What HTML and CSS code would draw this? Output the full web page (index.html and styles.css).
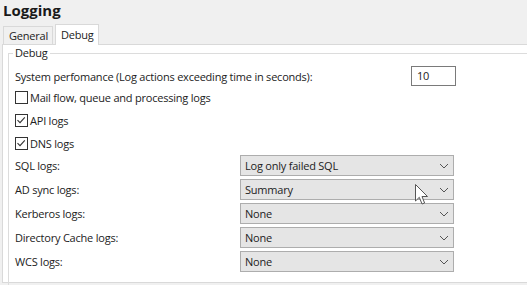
FILE: index.html
```html
<!DOCTYPE html>
<html>
<head>
<meta charset="utf-8">
<link rel="stylesheet" href="styles.css">
</head>
<body>
<div class="title">Logging</div>
<div class="tabs">
  <div class="tab">General</div>
  <div class="tab active">Debug</div>
</div>
<div class="panel">
  <div class="group">
    <div class="legend">Debug</div>
    <div class="row perf">
      <span class="label">System perfomance (Log actions exceeding time in seconds):</span>
      <span class="textbox">10</span>
    </div>
    <div class="check"><span class="box"></span><span>Mail flow, queue and processing logs</span></div>
    <div class="check"><span class="box checked"><svg viewBox="0 0 12 12" width="12" height="12"><path d="M2.5 6.2 L5 8.7 L9.8 3.3" fill="none" stroke="#333" stroke-width="1.1"/></svg></span><span>API logs</span></div>
    <div class="check"><span class="box checked"><svg viewBox="0 0 12 12" width="12" height="12"><path d="M2.5 6.2 L5 8.7 L9.8 3.3" fill="none" stroke="#333" stroke-width="1.1"/></svg></span><span>DNS logs</span></div>
    <div class="selects">
      <div class="row sel"><span class="label">SQL logs:</span><span class="combo">Log only failed SQL<svg class="chev" viewBox="0 0 10 6" width="10" height="6"><path d="M1 1 L5 5 L9 1" fill="none" stroke="#555" stroke-width="1"/></svg></span></div>
      <div class="row sel"><span class="label">AD sync logs:</span><span class="combo">Summary<svg class="chev" viewBox="0 0 10 6" width="10" height="6"><path d="M1 1 L5 5 L9 1" fill="none" stroke="#555" stroke-width="1"/></svg></span></div>
      <div class="row sel"><span class="label">Kerberos logs:</span><span class="combo">None<svg class="chev" viewBox="0 0 10 6" width="10" height="6"><path d="M1 1 L5 5 L9 1" fill="none" stroke="#555" stroke-width="1"/></svg></span></div>
      <div class="row sel"><span class="label">Directory Cache logs:</span><span class="combo">None<svg class="chev" viewBox="0 0 10 6" width="10" height="6"><path d="M1 1 L5 5 L9 1" fill="none" stroke="#555" stroke-width="1"/></svg></span></div>
      <div class="row sel"><span class="label">WCS logs:</span><span class="combo">None<svg class="chev" viewBox="0 0 10 6" width="10" height="6"><path d="M1 1 L5 5 L9 1" fill="none" stroke="#555" stroke-width="1"/></svg></span></div>
    </div>
  </div>
</div>
<svg class="cursor" viewBox="0 0 14 22" width="14" height="22"><path d="M0.5 0.5 L0.5 17 L4.3 13.3 L7 20 L9.6 19 L7 12.5 L12.5 12.5 Z" fill="#fff" stroke="#555" stroke-width="1"/></svg>
</body>
</html>
```
FILE: styles.css
```css
html, body {
  margin: 0;
  padding: 0;
}
body {
  width: 527px;
  height: 285px;
  background: #f0f0f0;
  font-family: "Open Sans", "Noto Sans", sans-serif;
  font-size: 11px;
  letter-spacing: -0.22px;
  color: #222;
  position: relative;
  overflow: hidden;
}
.title {
  height: 24px;
  padding-left: 3px;
  font-size: 15px;
  font-weight: bold;
  line-height: 20px;
  letter-spacing: 0;
  color: #1a1a1a;
}
.tabs {
  display: flex;
  align-items: flex-end;
  height: 20px;
  padding-left: 3px;
}
.tab {
  height: 17px;
  line-height: 17px;
  padding: 0 4px 0 5px;
  border: 1px solid #d9d9d9;
  border-bottom: none;
  background: #f0f0f0;
  width: 39px;
}
.tab.active {
  height: 20px;
  line-height: 19px;
  background: #fff;
  width: 33px;
  margin-left: 2px;
  margin-bottom: -1px;
  position: relative;
  z-index: 1;
}
.panel {
  margin-left: 2px;
  height: 239px;
  background: #fff;
  border: 1px solid #d9d9d9;
  border-right: none;
  padding: 8px 0 0 5px;
  box-sizing: border-box;
}
.group {
  border-top: 1px solid #dcdcdc;
  border-left: 1px solid #dcdcdc;
  height: 231px;
  padding-left: 6px;
  position: relative;
}
.legend {
  position: absolute;
  top: -8px;
  left: 4px;
  background: #fff;
  padding: 0 2px;
  line-height: 14px;
}
.row {
  display: flex;
  align-items: center;
}
.perf {
  margin-top: 12px;
  height: 20px;
}
.label {
  flex: 1;
}
.textbox {
  width: 38px;
  height: 18px;
  border: 1px solid #7a7a7a;
  line-height: 18px;
  padding-left: 5px;
  margin-right: 71px;
  background: #fff;
}
.check {
  display: flex;
  align-items: center;
  height: 23px;
  gap: 2px;
}
.box {
  width: 11px;
  height: 11px;
  border: 1px solid #333;
  display: inline-flex;
  background: #fff;
}
.box svg {
  margin: -1px 0 0 -1px;
}
.selects {
  margin-top: 0;
  display: flex;
  flex-direction: column;
  gap: 3px;
}
.sel {
  height: 21px;
}
.sel .label {
  flex: 0 0 225px;
}
.combo {
  width: 214px;
  border: 1px solid #adadad;
  background: #e5e5e5;
  display: flex;
  align-items: center;
  justify-content: space-between;
  padding: 0 4px 0 4px;
  box-sizing: border-box;
  height: 21px;
}
.cursor {
  position: absolute;
  left: 415px;
  top: 184px;
}
```
